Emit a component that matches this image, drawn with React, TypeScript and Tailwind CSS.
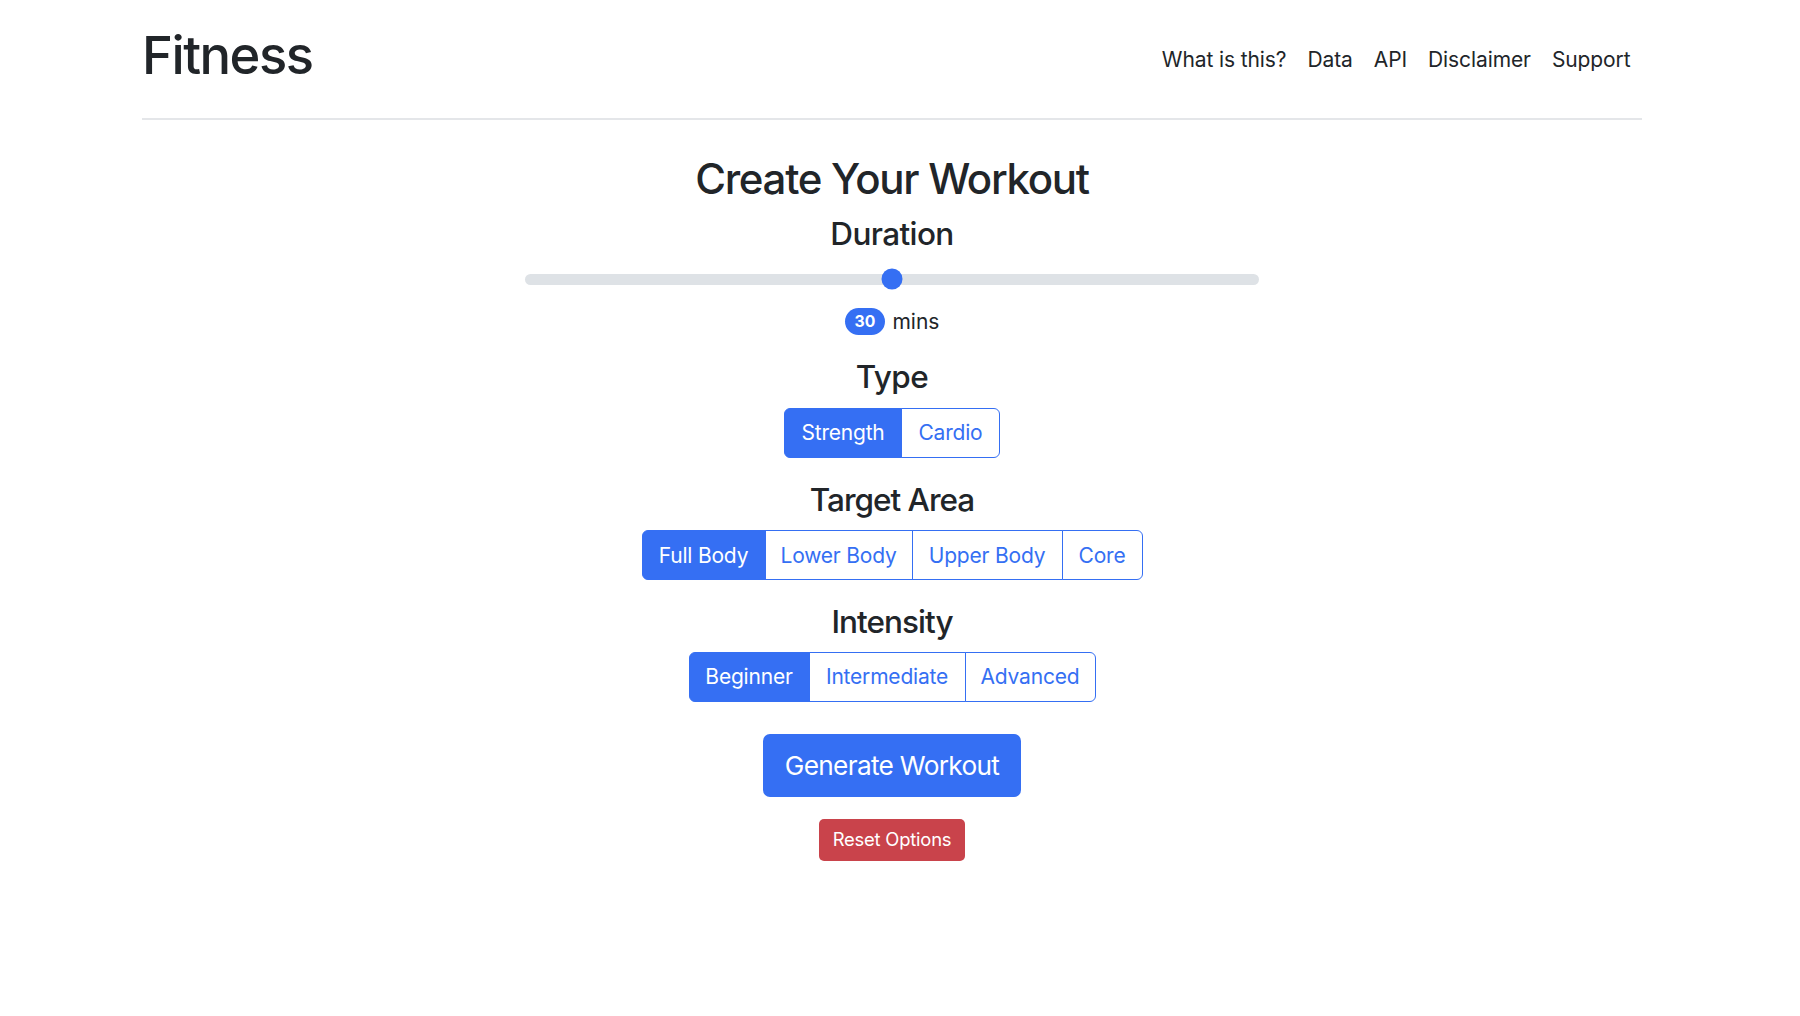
import { useState } from "react"

type Opt = { label: string; w: string }

function ButtonGroup({ options, value, onChange }: { options: Opt[]; value: string; onChange: (v: string) => void }) {
  return (
    <div className="flex">
      {options.map((o, i) => {
        const active = o.label === value
        return (
          <button
            key={o.label}
            onClick={() => onChange(o.label)}
            className={[
              "h-[50px] border border-[#356ff3] text-[21px] leading-[31.5px] tracking-[-0.2px] text-center",
              o.w,
              i > 0 ? "-ml-px" : "rounded-l-[6px]",
              i === options.length - 1 ? "rounded-r-[6px]" : "",
              active ? "bg-[#356ff3] text-white relative z-10" : "bg-white text-[#356ff3]",
            ].join(" ")}
          >
            {o.label}
          </button>
        )
      })}
    </div>
  )
}

export default function App() {
  const [type, setType] = useState("Strength")
  const [area, setArea] = useState("Full Body")
  const [level, setLevel] = useState("Beginner")
  const duration = 30

  return (
    <div className="min-h-screen bg-white text-[#212529]" style={{ fontFamily: "Inter, 'Liberation Sans', sans-serif" }}>
      <div className="ml-[142px] w-[1500px]">
        {/* Header */}
        <header className="flex justify-between items-start pt-[24px] pb-[31px] border-b-2 border-[#e4e6e9]">
          <a className="text-[52.5px] leading-[63px] font-medium tracking-[-1.5px]">Fitness</a>
          <nav className="flex mt-[9px] mr-[1px]">
            {["What is this?", "Data", "API", "Disclaimer", "Support"].map((l) => (
              <a key={l} className="px-[10.5px] py-[10.5px] text-[21px] leading-[31.5px] tracking-[-0.1px]">
                {l}
              </a>
            ))}
          </nav>
        </header>

        {/* Main */}
        <main className="flex flex-col items-center pt-[34px]">
          <h2 className="text-[42px] leading-[50.4px] font-medium tracking-[-1.3px] mb-[11px]">Create Your Workout</h2>

          <h4 className="text-[31.5px] leading-[37.8px] font-medium tracking-[-0.6px] mb-[10.5px]">Duration</h4>
          <div className="relative w-[734px] h-[31.5px] flex items-center">
            <div className="w-full h-[10.5px] rounded-full bg-[#dee2e6]" />
            <div
              className="absolute top-1/2 -translate-y-1/2 -translate-x-1/2 w-[21px] h-[21px] rounded-full bg-[#356ff3]"
              style={{ left: `${((duration - 5) / 50) * 100}%` }}
            />
          </div>
          <p className="mt-[11px] mb-[20.5px] text-[21px] leading-[31.5px] flex items-center gap-[7px]">
            <span className="inline-flex items-center justify-center h-[27px] px-[10px] rounded-full bg-[#356ff3] text-white text-[15.75px] font-bold">
              {duration}
            </span>
            mins
          </p>

          <h4 className="text-[31.5px] leading-[37.8px] font-medium tracking-[-0.6px] mb-[11.5px]">Type</h4>
          <ButtonGroup
            value={type}
            onChange={setType}
            options={[
              { label: "Strength", w: "w-[118px]" },
              { label: "Cardio", w: "w-[99px]" },
            ]}
          />

          <h4 className="mt-[23.5px] text-[31.5px] leading-[37.8px] font-medium tracking-[-1px] mb-[11.5px]">Target Area</h4>
          <ButtonGroup
            value={area}
            onChange={setArea}
            options={[
              { label: "Full Body", w: "w-[124px]" },
              { label: "Lower Body", w: "w-[148px]" },
              { label: "Upper Body", w: "w-[151px]" },
              { label: "Core", w: "w-[81px]" },
            ]}
          />

          <h4 className="mt-[22.5px] text-[31.5px] leading-[37.8px] font-medium tracking-[-0.95px] mb-[11.5px]">Intensity</h4>
          <ButtonGroup
            value={level}
            onChange={setLevel}
            options={[
              { label: "Beginner", w: "w-[121px]" },
              { label: "Intermediate", w: "w-[157px]" },
              { label: "Advanced", w: "w-[131px]" },
            ]}
          />

          <button className="mt-[31.5px] w-[258px] h-[63px] rounded-[7px] bg-[#356ff3] text-white text-[26.25px] leading-[39px] tracking-[-0.7px]">
            Generate Workout
          </button>
          <button className="mt-[22px] w-[146px] h-[42px] rounded-[5px] bg-[#c9434b] text-white text-[18.4px] leading-[27px] tracking-[-0.2px]">
            Reset Options
          </button>
        </main>
      </div>
    </div>
  )
}
